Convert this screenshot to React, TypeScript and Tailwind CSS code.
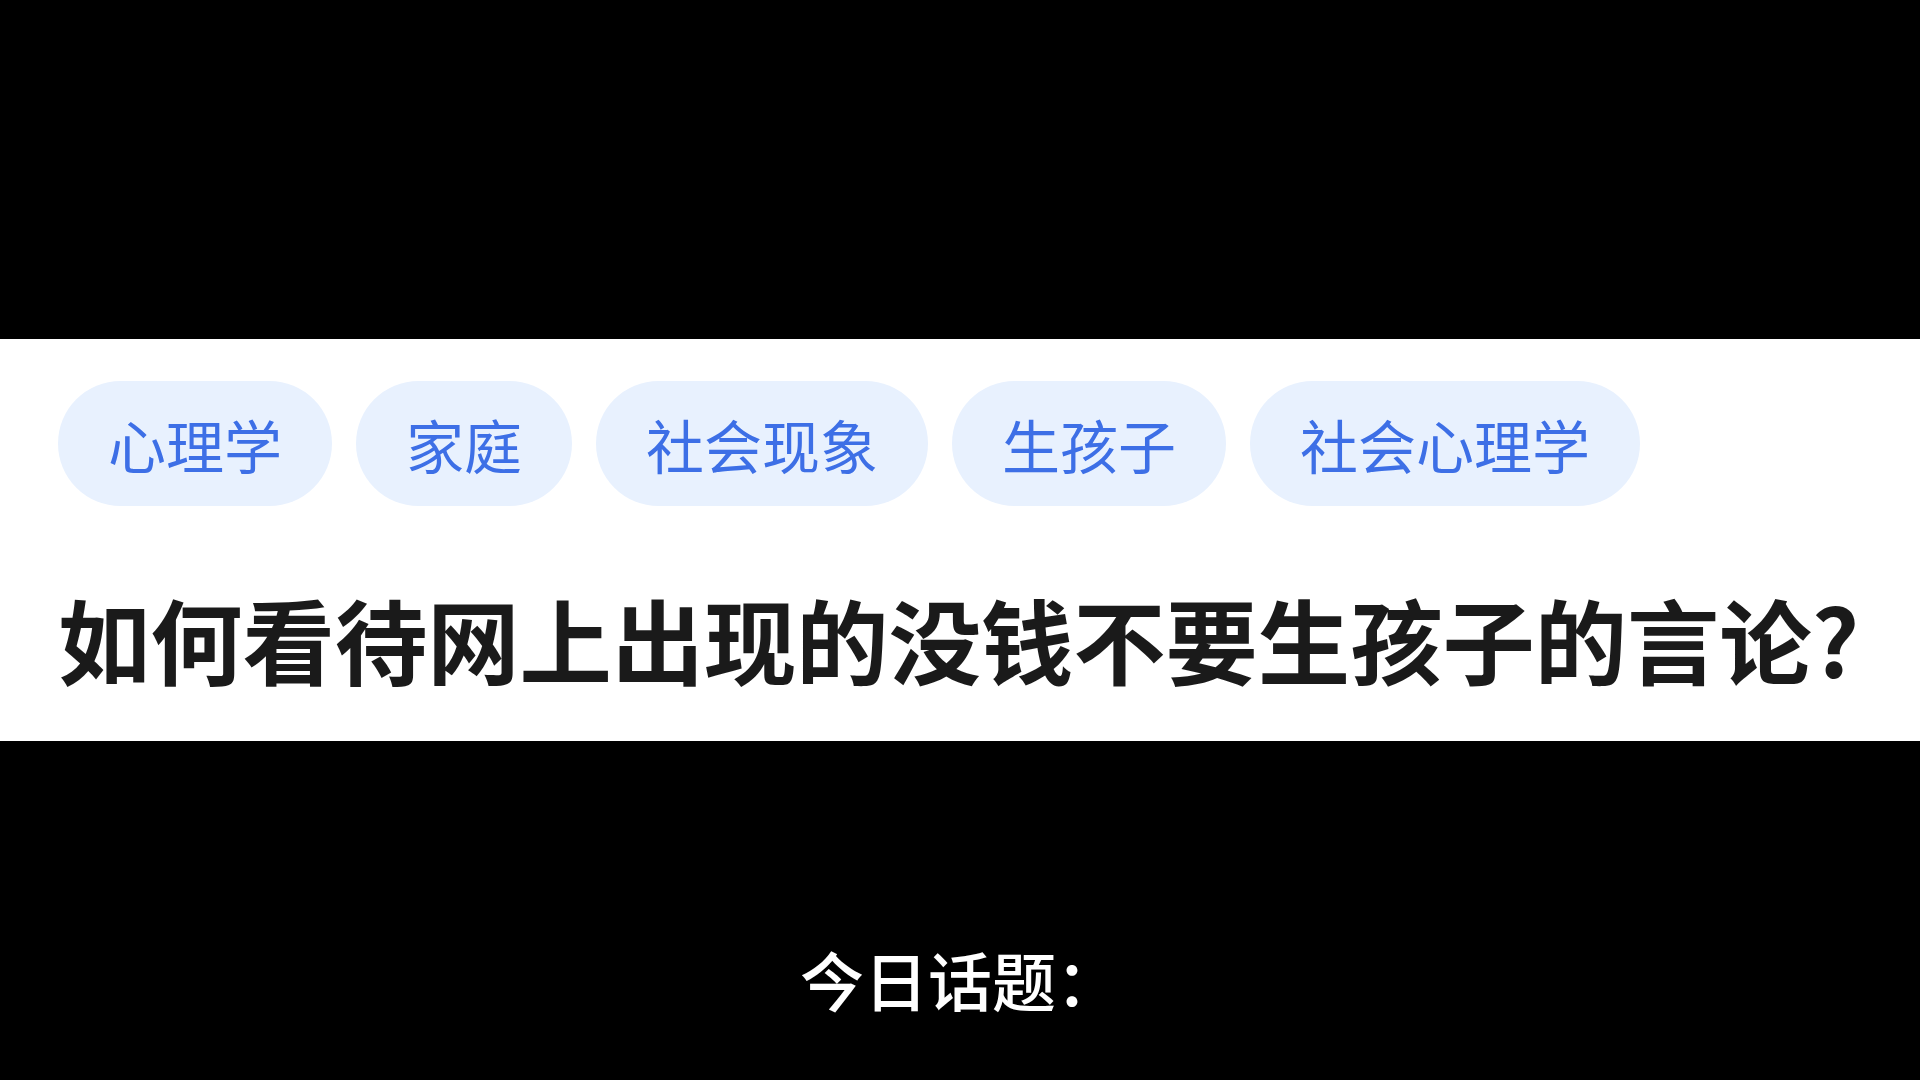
const tags = ["心理学", "家庭", "社会现象", "生孩子", "社会心理学"]

export default function App() {
  return (
    <div
      className="flex h-[1080px] w-[1920px] flex-col bg-black"
      style={{ fontFamily: '"Noto Sans CJK SC", "Noto Sans", sans-serif' }}
    >
      <div className="h-[339px] shrink-0" />
      <section className="flex h-[402px] shrink-0 flex-col bg-white pl-[58px] pt-[42px]">
        <div className="flex gap-[24px]">
          {tags.map((t) => (
            <span
              key={t}
              className="flex h-[125px] items-center rounded-full bg-[#e8f1fe] px-[50px] text-[58px] leading-none text-[#3d6fe6]"
            >
              {t}
            </span>
          ))}
        </div>
        <h1 className="mt-[86px] text-[92.3px] font-bold leading-none text-[#1a1a1a]">
          如何看待网上出现的没钱不要生孩子的言论?
        </h1>
      </section>
      <div className="flex flex-1 justify-center pt-[205px]">
        <p className="text-[64px] font-medium leading-none text-white">今日话题：</p>
      </div>
    </div>
  )
}
